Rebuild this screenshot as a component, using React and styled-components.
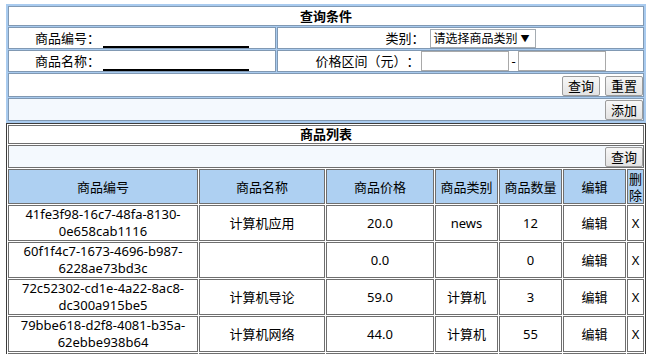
import React from "react";
import styled, { createGlobalStyle } from "styled-components";

const GlobalStyle = createGlobalStyle`
  html, body {
    margin: 0;
    padding: 0;
    background: #fff;
    overflow: hidden;
  }
  body {
    font: 13px "Noto Sans", "Noto Sans CJK SC", sans-serif;
    color: #000;
    text-spacing-trim: space-all;
  }
`;

const Page = styled.div`
  padding: 4px 0 0 6px;
`;

const BaseTable = styled.table`
  width: 640px;
  table-layout: fixed;
  border-collapse: separate;
  border-spacing: 1px;
`;

const QueryTable = styled(BaseTable)`
  border: 1px solid #a9cbef;
  background: #a9cbef;
`;

const ListTable = styled(BaseTable)`
  border: 1px solid #3c3c3c;
  border-right-width: 2px;
  background: #fff;
`;

const Col = styled.col`
  width: ${(p) => p.$w}px;
`;

const QCell = styled.td`
  box-sizing: border-box;
  border: 1px solid #8199b3;
  background: ${(p) => (p.$tint ? "#f4f9fe" : "#fff")};
  padding: ${(p) => p.$pad || "0"};
  text-align: ${(p) => p.$align || "center"};
  line-height: ${(p) => p.$lh || 20}px;
  vertical-align: top;
  white-space: nowrap;
`;

const Title = styled.b`
  display: block;
  font-weight: bold;
  line-height: ${(p) => p.$lh || 18}px;
  text-align: center;
`;

const Field = styled.div`
  display: inline-flex;
  align-items: center;
  gap: ${(p) => p.$gap || 3}px;
  height: 20px;
`;

const LineInput = styled.span`
  display: inline-block;
  width: 146px;
  height: 16px;
  border-bottom: 2px solid #000;
  margin-top: 2px;
`;

const FakeSelect = styled.span`
  display: inline-flex;
  align-items: center;
  justify-content: space-between;
  box-sizing: border-box;
  width: 106px;
  height: 19px;
  padding: 0 5px 0 3px;
  border: 1px solid #a5acb2;
  background: #fff;
  line-height: 17px;
  font-size: 12px;
`;

const Arrow = styled.span`
  font-size: 9px;
  line-height: 17px;
`;

const BoxInput = styled.span`
  display: inline-block;
  box-sizing: border-box;
  width: 88px;
  height: 20px;
  border: 1px solid #a9a9a9;
  background: #fff;
`;

const ButtonBar = styled.div`
  display: flex;
  justify-content: flex-end;
  gap: 5px;
`;

const Btn = styled.button`
  font: 13px "Noto Sans", "Noto Sans CJK SC", sans-serif;
  color: #000;
  box-sizing: border-box;
  height: 20px;
  padding: 0 5px;
  line-height: 17px;
  border: 1px solid #9c9c9c;
  border-radius: 2px;
  background: linear-gradient(#f7f7f7, #e3e3e3);
  cursor: pointer;
`;

const LCell = styled.td`
  box-sizing: border-box;
  border: 1px solid #6f6f6f;
  background: ${(p) => (p.$tint ? "#f4f9fe" : "#fff")};
  padding: ${(p) => p.$pad || "0"};
  text-align: center;
  vertical-align: middle;
  line-height: 17px;
`;

const HeadCell = styled.th`
  box-sizing: border-box;
  border: 1px solid #6f6f6f;
  background: #aed0f2;
  padding: 1px 0 0;
  font-weight: normal;
  text-align: center;
  vertical-align: middle;
  line-height: 16px;
  word-break: break-all;
`;

const DataCell = styled(LCell)`
  padding: 0;
  height: 36px;
`;

const columns = [190, 126, 108, 63, 63, 63, 17];
const heads = ["商品编号", "商品名称", "商品价格", "商品类别", "商品数量", "编辑", "删除"];

const products = [
  { id: "41fe3f98-16c7-48fa-8130-0e658cab1116", name: "计算机应用", price: "20.0", type: "news", count: "12" },
  { id: "60f1f4c7-1673-4696-b987-6228ae73bd3c", name: "", price: "0.0", type: "", count: "0" },
  { id: "72c52302-cd1e-4a22-8ac8-dc300a915be5", name: "计算机导论", price: "59.0", type: "计算机", count: "3" },
  { id: "79bbe618-d2f8-4081-b35a-62ebbe938b64", name: "计算机网络", price: "44.0", type: "计算机", count: "55" },
];

export default function App() {
  return (
    <Page>
      <GlobalStyle />
      <QueryTable>
        <colgroup>
          <Col $w={268} />
          <Col $w={367} />
        </colgroup>
        <tbody>
          <tr>
            <QCell colSpan={2}>
              <Title>查询条件</Title>
            </QCell>
          </tr>
          <tr>
            <QCell>
              <Field>
                <span>商品编号：</span>
                <LineInput />
              </Field>
            </QCell>
            <QCell>
              <Field $gap={5}>
                <span>类别：</span>
                <FakeSelect>
                  请选择商品类别
                  <Arrow>▼</Arrow>
                </FakeSelect>
              </Field>
            </QCell>
          </tr>
          <tr>
            <QCell>
              <Field>
                <span>商品名称：</span>
                <LineInput />
              </Field>
            </QCell>
            <QCell>
              <Field $gap={2}>
                <span>价格区间（元）：</span>
                <BoxInput />
                <span>-</span>
                <BoxInput />
              </Field>
            </QCell>
          </tr>
          <tr>
            <QCell colSpan={2} $pad="2px 0 0">
              <ButtonBar>
                <Btn>查询</Btn>
                <Btn>重置</Btn>
              </ButtonBar>
            </QCell>
          </tr>
          <tr>
            <QCell colSpan={2} $tint $pad="1px 0 0" $lh={21}>
              <ButtonBar>
                <Btn>添加</Btn>
              </ButtonBar>
            </QCell>
          </tr>
        </tbody>
      </QueryTable>

      <ListTable>
        <colgroup>
          {columns.map((w, i) => (
            <Col key={i} $w={w} />
          ))}
        </colgroup>
        <tbody>
          <tr>
            <LCell colSpan={7}>
              <Title $lh={17}>商品列表</Title>
            </LCell>
          </tr>
          <tr>
            <LCell colSpan={7} $tint $pad="1px 0 0">
              <ButtonBar>
                <Btn>查询</Btn>
              </ButtonBar>
            </LCell>
          </tr>
          <tr>
            {heads.map((h) => (
              <HeadCell key={h}>{h}</HeadCell>
            ))}
          </tr>
          {products.map((p) => (
            <tr key={p.id}>
              <DataCell>{p.id}</DataCell>
              <DataCell>{p.name}</DataCell>
              <DataCell>{p.price}</DataCell>
              <DataCell>{p.type}</DataCell>
              <DataCell>{p.count}</DataCell>
              <DataCell>编辑</DataCell>
              <DataCell>X</DataCell>
            </tr>
          ))}
          <tr>
            {columns.map((w, i) => (
              <DataCell key={i} />
            ))}
          </tr>
        </tbody>
      </ListTable>
    </Page>
  );
}
